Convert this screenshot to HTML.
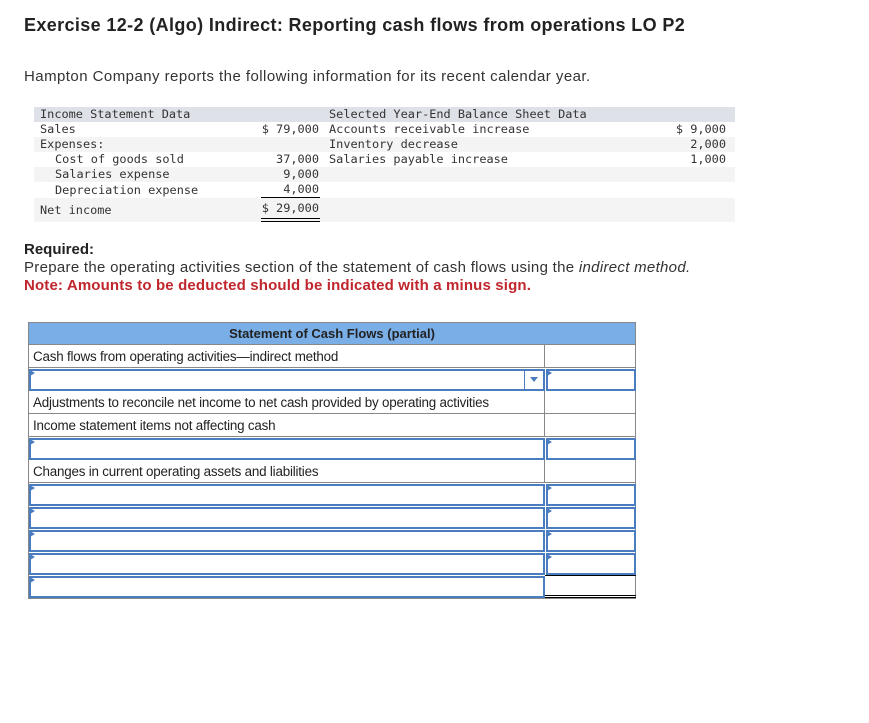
<!DOCTYPE html>
<html><head><style>
body{margin:0;width:869px;height:723px;background:#fff;position:relative;font-family:"Liberation Sans",sans-serif;color:#222}
.a{position:absolute;white-space:nowrap}
.m{font-family:"DejaVu Sans Mono","Liberation Mono",monospace;font-size:11.9px;color:#333}
.r{position:absolute;left:34px;width:701px}
.c{position:absolute;box-sizing:border-box}
.in{position:absolute;box-sizing:border-box;border:2px solid #4a7cc0;background:#fff}
.tri{position:absolute;width:0;height:0;border-top:3px solid transparent;border-bottom:3px solid transparent;border-left:5px solid #4a7cc0}
</style></head><body>
<div class="a" style="left:24px;top:15px;font-size:18px;font-weight:bold;color:#222;letter-spacing:0.37px">Exercise 12-2 (Algo) Indirect: Reporting cash flows from operations LO P2</div>
<div class="a" style="left:24px;top:68px;font-size:15px;color:#333;letter-spacing:0.45px">Hampton Company reports the following information for its recent calendar year.</div>

<div class="r" style="top:107px;height:15px;background:#dfe1e8"></div>
<div class="r" style="top:137px;height:15px;background:#f4f4f4"></div>
<div class="r" style="top:167px;height:15px;background:#f4f4f4"></div>
<div class="r" style="top:198px;height:24px;background:#f4f4f4"></div>
<div class="a m" style="left:40px;top:107px">Income Statement Data</div>
<div class="a m" style="left:329px;top:107px">Selected Year-End Balance Sheet Data</div>
<div class="a m" style="left:40px;top:122px">Sales</div>
<div class="a m" style="left:40px;top:137px">Expenses:</div>
<div class="a m" style="left:55px;top:152px">Cost of goods sold</div>
<div class="a m" style="left:55px;top:167px">Salaries expense</div>
<div class="a m" style="left:55px;top:183px">Depreciation expense</div>
<div class="a m" style="left:40px;top:203px">Net income</div>
<div class="a m" style="right:550px;top:122px">$ 79,000</div>
<div class="a m" style="right:550px;top:152px">37,000</div>
<div class="a m" style="right:550px;top:167px">9,000</div>
<div class="a m" style="right:550px;top:182px">4,000</div>
<div class="a m" style="right:550px;top:201px">$ 29,000</div>
<div class="a" style="left:261px;top:197px;width:59px;border-top:1px solid #000"></div>
<div class="a" style="left:261px;top:218px;width:59px;height:2px;border-top:1px solid #000;border-bottom:1px solid #000"></div>
<div class="a m" style="left:329px;top:122px">Accounts receivable increase</div>
<div class="a m" style="left:329px;top:137px">Inventory decrease</div>
<div class="a m" style="left:329px;top:152px">Salaries payable increase</div>
<div class="a m" style="right:143px;top:122px">$ 9,000</div>
<div class="a m" style="right:143px;top:137px">2,000</div>
<div class="a m" style="right:143px;top:152px">1,000</div>

<div class="a" style="left:24px;top:241px;font-size:15px;font-weight:bold;color:#222">Required:</div>
<div class="a" style="left:24px;top:259px;font-size:15px;color:#333;letter-spacing:0.3px">Prepare the operating activities section of the statement of cash flows using the <i>indirect method.</i></div>
<div class="a" style="left:24px;top:277px;font-size:15px;font-weight:bold;color:#c0262d;letter-spacing:0.15px">Note: Amounts to be deducted should be indicated with a minus sign.</div>

<div class="c" style="left:28px;top:322px;width:608px;height:277px;border:1px solid #888"></div>
<div class="c" style="left:29px;top:323px;width:606px;height:22px;background:#7aaee6;border-bottom:1px solid #888;text-align:center;font-weight:bold;font-size:13px;line-height:22px">Statement of Cash Flows (partial)</div>
<div id="rows"></div>
<script>
var h='';var tops=[345,368,391,414,437,460,483,506,529,552,575];
var kinds=['t:Cash flows from operating activities—indirect method','dd','t:Adjustments to reconcile net income to net cash provided by operating activities','t:Income statement items not affecting cash','i','t:Changes in current operating assets and liabilities','i','i','i','i','last'];
for(var k=0;k<11;k++){var t=tops[k],s=kinds[k];
if(s[0]=='t'){h+='<div class="c" style="left:29px;top:'+t+'px;width:516px;height:23px;border-bottom:1px solid #888;border-right:1px solid #888;font-size:13.4px;line-height:24px;padding-left:4px;letter-spacing:-0.2px">'+s.slice(2)+'</div><div class="c" style="left:545px;top:'+t+'px;width:90px;height:23px;border-bottom:1px solid #888"></div>';}
else{h+='<div class="in" style="left:29px;top:'+(t+1)+'px;width:516px;height:22px"></div><div class="tri" style="left:30px;top:'+(t+2)+'px"></div>';
if(s=='dd')h+='<div class="c" style="left:524px;top:'+(t+2)+'px;width:1px;height:20px;background:#4a7cc0"></div><div class="a" style="left:530px;top:'+(t+9)+'px;border-left:4px solid transparent;border-right:4px solid transparent;border-top:5px solid #4a7cc0"></div>';
if(s=='last'){h+='<div class="c" style="left:545px;top:'+(t+20)+'px;width:91px;height:3px;border-top:1px solid #000;border-bottom:1px solid #000"></div><div class="c" style="left:545px;top:'+t+'px;width:91px;border-top:1px solid #000"></div>';}
else{h+='<div class="in" style="left:546px;top:'+(t+1)+'px;width:90px;height:22px"></div><div class="tri" style="left:547px;top:'+(t+2)+'px"></div>';}}}
document.getElementById('rows').innerHTML=h;
</script>
</body></html>
